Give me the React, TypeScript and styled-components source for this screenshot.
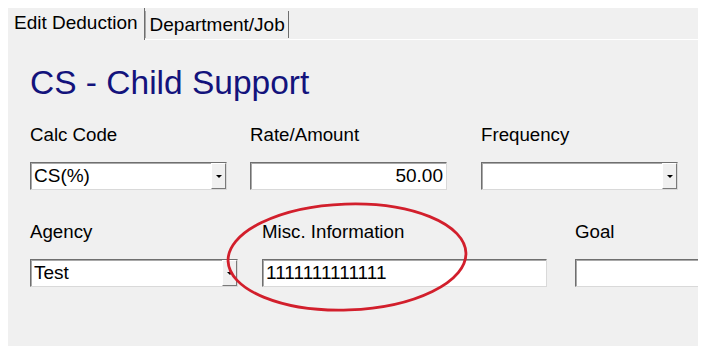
import styled, { createGlobalStyle } from "styled-components";

const GlobalStyle = createGlobalStyle`
  html, body {
    margin: 0;
    padding: 0;
    background: #ffffff;
  }
  body {
    font-family: "Liberation Sans", Arial, sans-serif;
    color: #000;
  }
`;

const Page = styled.div`
  width: 704px;
  height: 354px;
  padding: 8px 6px 8px 8px;
  box-sizing: border-box;
`;

const Panel = styled.div`
  position: relative;
  width: 690px;
  height: 338px;
  background: #f0f0f0;
  overflow: hidden;
  display: flex;
  flex-direction: column;
`;

const TabStrip = styled.div`
  display: flex;
  align-items: flex-end;
  height: 32px;
  border-bottom: 1px solid #ffffff;
  box-sizing: border-box;
`;

const Tab = styled.div<{ $active?: boolean }>`
  box-sizing: border-box;
  font-size: 19px;
  line-height: 22px;
  white-space: nowrap;
  background: #f0f0f0;
  ${(p) =>
    p.$active
      ? `
    height: 33px;
    margin-bottom: -1px;
    padding: 5px 6px 0 6px;
    border-right: 1px solid #6e6e6e;
  `
      : `
    height: 27px;
    margin-bottom: 1px;
    padding: 3px 3px 0 4px;
    border-left: 1px solid #a8a8a8;
    border-right: 1px solid #6e6e6e;
  `}
`;

const Content = styled.div`
  padding: 24px 0 0 22px;
  display: flex;
  flex-direction: column;
`;

const Title = styled.h1`
  margin: 0 0 22px 0;
  font-size: 33.5px;
  font-weight: normal;
  line-height: 38px;
  color: #13137c;
`;

const Row = styled.div`
  display: flex;
  margin-bottom: 31px;
`;

const Field = styled.div<{ $width: number; $gap?: number }>`
  display: flex;
  flex-direction: column;
  flex: 0 0 ${(p) => p.$width}px;
  margin-right: ${(p) => p.$gap ?? 0}px;
`;

const Label = styled.div`
  font-size: 18.7px;
  line-height: 22px;
  margin-bottom: 16px;
  white-space: nowrap;
`;

const Box = styled.div<{ $align?: "left" | "right" }>`
  position: relative;
  height: 28px;
  box-sizing: border-box;
  background: #ffffff;
  border-top: 1px solid #6f6f6f;
  border-left: 1px solid #6f6f6f;
  border-right: 1px solid #d9d9d9;
  border-bottom: 1px solid #d9d9d9;
  box-shadow: inset 1px 1px 0 #a9a9a9;
  font-size: 19px;
  line-height: 26px;
  padding: 0 3px 0 3px;
  white-space: nowrap;
  overflow: hidden;
  display: flex;
  justify-content: ${(p) => (p.$align === "right" ? "flex-end" : "flex-start")};
`;

const BoxText = styled.span`
  flex: 1;
  overflow: hidden;
`;

const DropButton = styled.div`
  flex: 0 0 15px;
  margin: 0 -3px 0 0;
  height: 26px;
  box-sizing: border-box;
  background: #f0f0f0;
  border-left: 1px solid #ffffff;
  border-top: 1px solid #ffffff;
  border-right: 1px solid #7a7a7a;
  border-bottom: 1px solid #7a7a7a;
  display: flex;
  align-items: center;
  justify-content: center;
`;

const Arrow = styled.span`
  width: 0;
  height: 0;
  border-left: 3px solid transparent;
  border-right: 3px solid transparent;
  border-top: 3px solid #000;
`;

const Annotation = styled.svg`
  position: absolute;
  left: 214px;
  top: 186px;
  pointer-events: none;
`;

function Select({ value }: { value: string }) {
  return (
    <Box>
      <BoxText>{value}</BoxText>
      <DropButton>
        <Arrow />
      </DropButton>
    </Box>
  );
}

export default function App() {
  return (
    <>
      <GlobalStyle />
      <Page>
        <Panel>
          <TabStrip>
            <Tab $active>Edit Deduction</Tab>
            <Tab>Department/Job</Tab>
          </TabStrip>
          <Content>
            <Title>CS - Child Support</Title>
            <Row>
              <Field $width={197} $gap={23}>
                <Label>Calc Code</Label>
                <Select value="CS(%)" />
              </Field>
              <Field $width={197} $gap={34}>
                <Label>Rate/Amount</Label>
                <Box $align="right">50.00</Box>
              </Field>
              <Field $width={197}>
                <Label>Frequency</Label>
                <Select value="" />
              </Field>
            </Row>
            <Row>
              <Field $width={208} $gap={24}>
                <Label>Agency</Label>
                <Select value="Test" />
              </Field>
              <Field $width={285} $gap={28}>
                <Label>Misc. Information</Label>
                <Box>1111111111111</Box>
              </Field>
              <Field $width={140}>
                <Label>Goal</Label>
                <Box />
              </Field>
            </Row>
          </Content>
          <Annotation width="250" height="126" viewBox="0 0 250 126">
            <ellipse
              cx="125"
              cy="63"
              rx="119"
              ry="53"
              fill="none"
              stroke="#d21f2c"
              strokeWidth="2.8"
              transform="rotate(-2 125 63)"
            />
          </Annotation>
        </Panel>
      </Page>
    </>
  );
}
